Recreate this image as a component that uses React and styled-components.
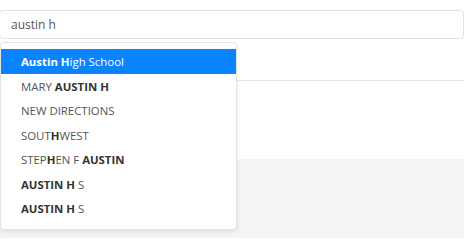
import React from 'react'
import styled, { createGlobalStyle } from 'styled-components'

const Global = createGlobalStyle`
  html, body { margin: 0; padding: 0; background: #fff; }
  body { font-family: "Open Sans", "Liberation Sans", sans-serif; }
`

const Page = styled.div`
  position: relative;
  width: 464px;
  padding-top: 10px;
`

const Input = styled.input`
  display: block;
  box-sizing: border-box;
  width: 465px;
  height: 29px;
  margin-left: -1px;
  padding: 0 11px;
  border: 1px solid #e2e2e2;
  border-radius: 4px;
  font-family: inherit;
  font-size: 12px;
  color: #555;
  outline: none;
`

const Header = styled.div`
  height: 41px;
  border-bottom: 1px solid #e6e6e6;
`

const Spacer = styled.div`
  height: 78px;
`

const Gray = styled.div`
  height: 79px;
  background: #f4f4f4;
`

const Menu = styled.ul`
  position: absolute;
  top: 42px;
  left: 0;
  width: 237px;
  box-sizing: border-box;
  margin: 0;
  padding: 6px 0 8px;
  list-style: none;
  background: #fff;
  border: 1px solid #e4e4e4;
  border-radius: 4px;
  box-shadow: 0 2px 4px rgba(0, 0, 0, 0.08);
`

const Item = styled.li`
  height: 24.5px;
  line-height: 25px;
  padding-left: 20px;
  font-size: 11.4px;
  white-space: nowrap;
  color: ${p => (p.$active ? '#fff' : '#555')};
  background: ${p => (p.$active ? '#0a84fd' : 'transparent')};
  b {
    font-weight: 700;
    color: ${p => (p.$active ? '#fff' : '#333')};
  }
`

const items = [
  [['b', 'Austin H'], ['', 'igh School']],
  [['', 'MARY '], ['b', 'AUSTIN H']],
  [['', 'NEW DIRECTIONS']],
  [['', 'SOUT'], ['b', 'H'], ['', 'WEST']],
  [['', 'STEP'], ['b', 'H'], ['', 'EN F '], ['b', 'AUSTIN']],
  [['b', 'AUSTIN H'], ['', ' S']],
  [['b', 'AUSTIN H'], ['', ' S']],
]

export default function App() {
  return (
    <Page>
      <Global />
      <Input defaultValue="austin h" />
      <Header />
      <Spacer />
      <Gray />
      <Menu>
        {items.map((parts, i) => (
          <Item key={i} $active={i === 0}>
            {parts.map(([t, s], j) => (t === 'b' ? <b key={j}>{s}</b> : <span key={j}>{s}</span>))}
          </Item>
        ))}
      </Menu>
    </Page>
  )
}
